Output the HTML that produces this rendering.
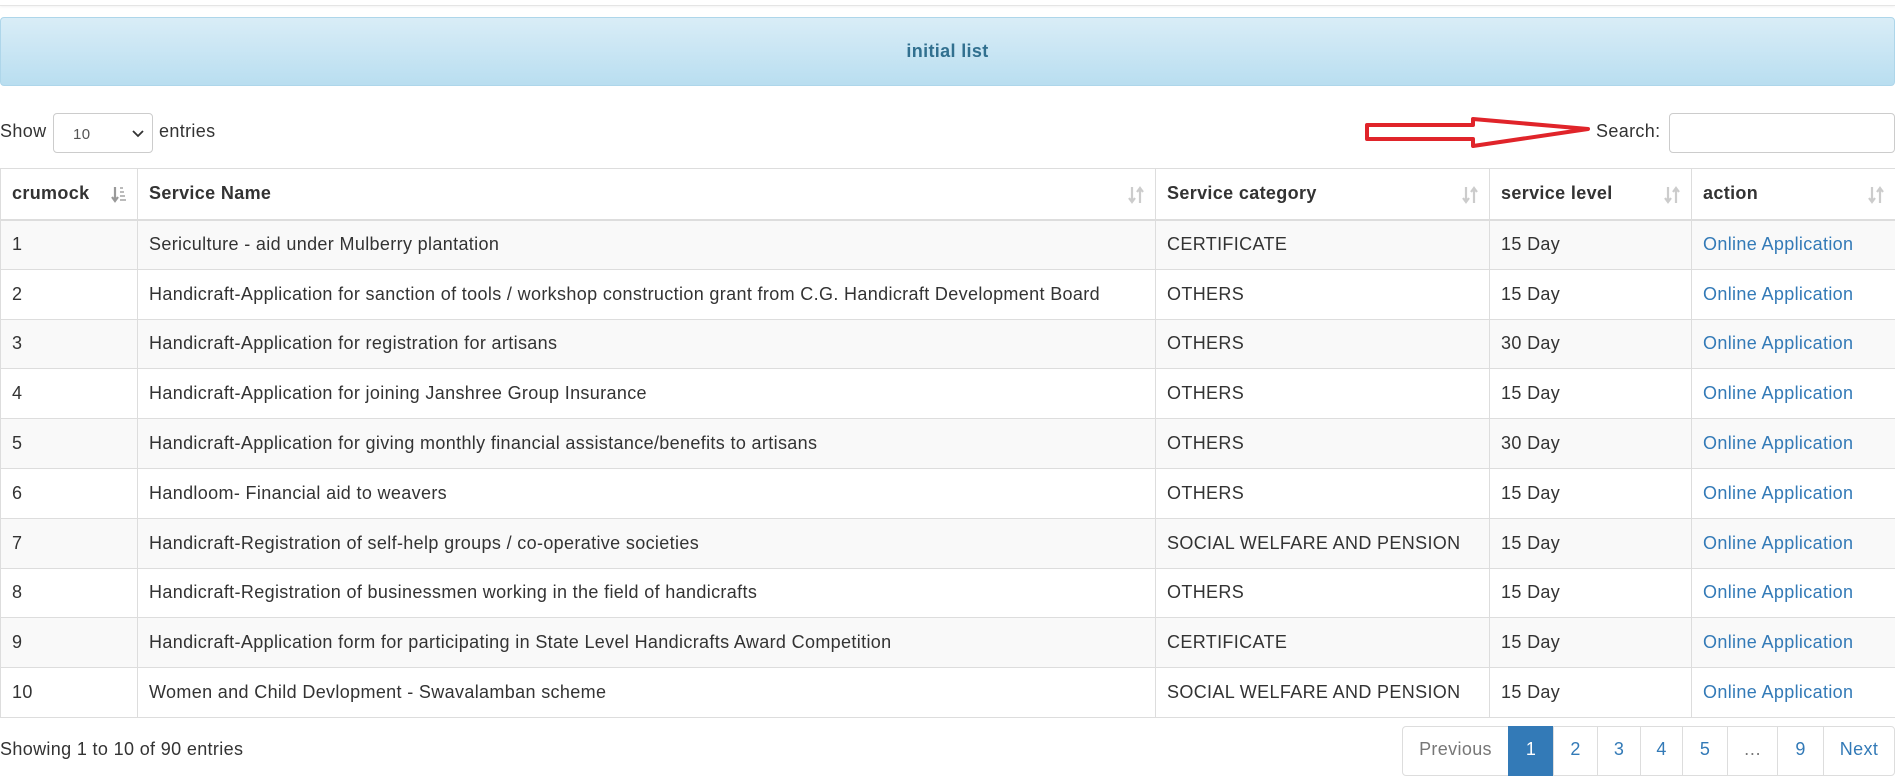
<!DOCTYPE html>
<html><head><style>
*{box-sizing:border-box;margin:0;padding:0}
body{width:1895px;height:761px;overflow:hidden;background:#fff;font-family:"Liberation Sans",Arial,sans-serif;font-size:18px;letter-spacing:0.35px;color:#333;position:relative}
.topbar{position:absolute;left:0;top:0;width:1895px;height:6px;border-bottom:1px solid #e5e5e5;background:#fff;box-shadow:0 1px 2px rgba(0,0,0,.05)}
.panel{position:absolute;left:0;top:17px;width:1895px;height:69px;border:1px solid #aed6ea;border-radius:4px;background:linear-gradient(#d9edf7,#b9def0);text-align:center;line-height:67px;font-weight:bold;color:#31708f;font-size:18px}
.show{position:absolute;left:0;top:121px}
.sel{position:absolute;left:53px;top:113px;width:100px;height:40px;border:1px solid #ccc;border-radius:4px;font-size:15px;padding:12px 0 0 19px;color:#555}
.sel svg{position:absolute;right:8px;top:16px}
.ent{position:absolute;left:159px;top:121px}
.srch{position:absolute;left:1596px;top:121px}
.sinput{position:absolute;left:1669px;top:113px;width:226px;height:40px;border:1px solid #ccc;border-radius:4px}
table{position:absolute;left:0;top:168px;width:1895px;border-collapse:collapse;table-layout:fixed}
td,th{border:1px solid #ddd;padding:0 11px;text-align:left;white-space:nowrap;overflow:hidden}
th{height:51px;border-bottom:2px solid #ddd;font-weight:bold;position:relative}
td{height:49.8px}
tbody tr:nth-child(odd){background:#f9f9f9}
a{color:#337ab7;text-decoration:none}
.si{position:absolute;right:10px;top:17px}
.info{position:absolute;left:0;top:739px}
.pag{position:absolute;top:726px;left:1402px;height:50px;display:flex}
.pag div{height:50px;border:1px solid #ddd;margin-left:-1px;padding-top:12px;text-align:center;color:#337ab7}
</style></head><body>
<div class="topbar"></div>
<div class="panel">initial list</div>
<div class="show">Show</div>
<div class="sel">10<svg width="12" height="8" viewBox="0 0 12 8"><path d="M1 1l5 5 5-5" stroke="#333" stroke-width="1.8" fill="none"/></svg></div>
<div class="ent">entries</div>
<svg style="position:absolute;left:1360px;top:114px" width="240" height="40" viewBox="0 0 240 40"><path d="M7 11H113V5L228 15 113 32V25H7Z" fill="none" stroke="#e0242a" stroke-width="4" stroke-linejoin="round"/></svg>
<div class="srch">Search:</div>
<div class="sinput"></div>
<table>
<colgroup><col style="width:137px"><col style="width:1018px"><col style="width:334px"><col style="width:202px"><col style="width:204px"></colgroup>
<thead><tr>
<th>crumock<svg class="si" width="16" height="18" viewBox="0 0 16 18"><path d="M4 1v13M1 11l3 4 3-4" stroke="#999" stroke-width="2.2" fill="none"/><path d="M9 2h3M9 6h4M9 10h5M9 14h6" stroke="#bbb" stroke-width="2"/></svg></th>
<th>Service Name<svg class="si" width="18" height="18" viewBox="0 0 18 18"><path d="M5 1v15M2 12l3 4 3-4M13 17V2M10 6l3-4 3 4" stroke="#ccc" stroke-width="2.2" fill="none"/></svg></th>
<th>Service category<svg class="si" width="18" height="18" viewBox="0 0 18 18"><path d="M5 1v15M2 12l3 4 3-4M13 17V2M10 6l3-4 3 4" stroke="#ccc" stroke-width="2.2" fill="none"/></svg></th>
<th>service level<svg class="si" width="18" height="18" viewBox="0 0 18 18"><path d="M5 1v15M2 12l3 4 3-4M13 17V2M10 6l3-4 3 4" stroke="#ccc" stroke-width="2.2" fill="none"/></svg></th>
<th>action<svg class="si" width="18" height="18" viewBox="0 0 18 18"><path d="M5 1v15M2 12l3 4 3-4M13 17V2M10 6l3-4 3 4" stroke="#ccc" stroke-width="2.2" fill="none"/></svg></th>
</tr></thead>
<tbody>
<tr><td>1</td><td>Sericulture - aid under Mulberry plantation</td><td>CERTIFICATE</td><td>15 Day</td><td><a>Online Application</a></td></tr>
<tr><td>2</td><td>Handicraft-Application for sanction of tools / workshop construction grant from C.G. Handicraft Development Board</td><td>OTHERS</td><td>15 Day</td><td><a>Online Application</a></td></tr>
<tr><td>3</td><td>Handicraft-Application for registration for artisans</td><td>OTHERS</td><td>30 Day</td><td><a>Online Application</a></td></tr>
<tr><td>4</td><td>Handicraft-Application for joining Janshree Group Insurance</td><td>OTHERS</td><td>15 Day</td><td><a>Online Application</a></td></tr>
<tr><td>5</td><td>Handicraft-Application for giving monthly financial assistance/benefits to artisans</td><td>OTHERS</td><td>30 Day</td><td><a>Online Application</a></td></tr>
<tr><td>6</td><td>Handloom- Financial aid to weavers</td><td>OTHERS</td><td>15 Day</td><td><a>Online Application</a></td></tr>
<tr><td>7</td><td>Handicraft-Registration of self-help groups / co-operative societies</td><td>SOCIAL WELFARE AND PENSION</td><td>15 Day</td><td><a>Online Application</a></td></tr>
<tr><td>8</td><td>Handicraft-Registration of businessmen working in the field of handicrafts</td><td>OTHERS</td><td>15 Day</td><td><a>Online Application</a></td></tr>
<tr><td>9</td><td>Handicraft-Application form for participating in State Level Handicrafts Award Competition</td><td>CERTIFICATE</td><td>15 Day</td><td><a>Online Application</a></td></tr>
<tr><td>10</td><td>Women and Child Devlopment - Swavalamban scheme</td><td>SOCIAL WELFARE AND PENSION</td><td>15 Day</td><td><a>Online Application</a></td></tr>
</tbody></table>
<div class="info">Showing 1 to 10 of 90 entries</div>
<div class="pag">
<div style="width:107px;color:#777;border-radius:4px 0 0 4px;margin-left:0">Previous</div>
<div style="width:46px;background:#337ab7;border-color:#337ab7;color:#fff">1</div>
<div style="width:45px">2</div>
<div style="width:44px">3</div>
<div style="width:43px">4</div>
<div style="width:46px">5</div>
<div style="width:51px;color:#777">…</div>
<div style="width:47px">9</div>
<div style="width:72px;border-radius:0 4px 4px 0">Next</div>
</div>
</body></html>
